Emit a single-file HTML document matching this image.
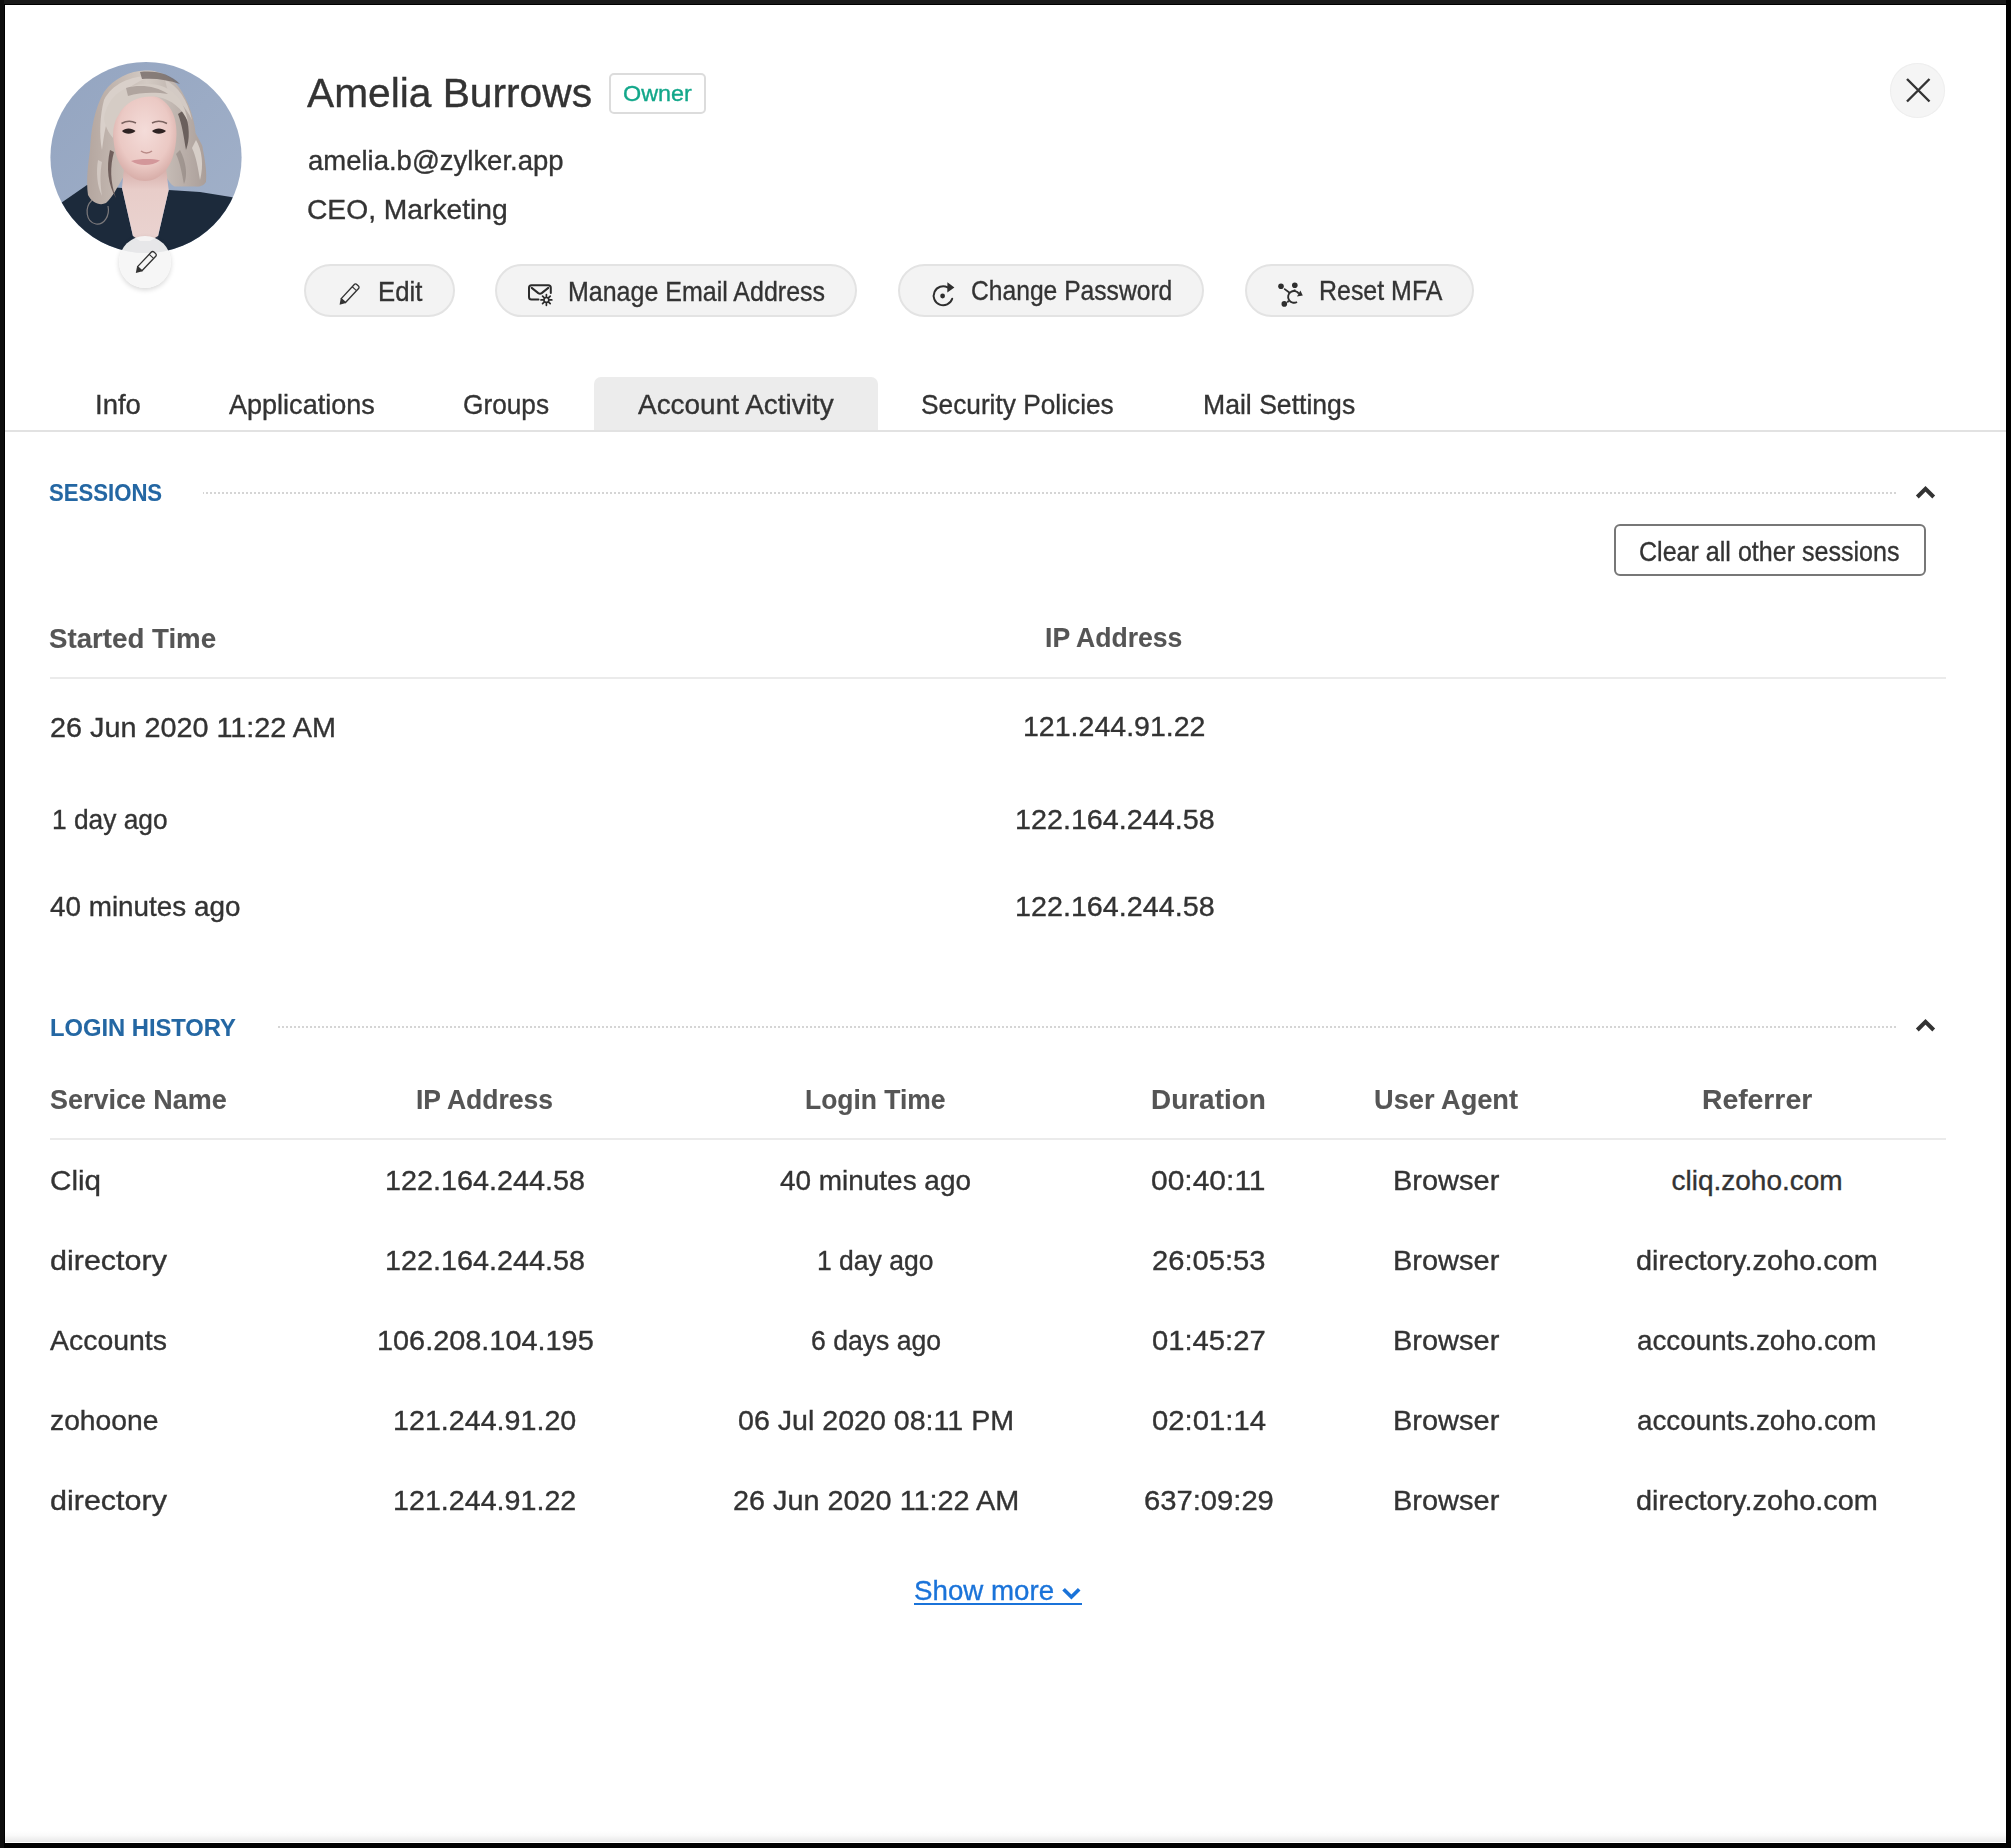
<!DOCTYPE html>
<html><head><meta charset="utf-8">
<style>
html,body{margin:0;padding:0;}
body{width:2011px;height:1848px;background:#000;position:relative;overflow:hidden;font-family:"Liberation Sans",sans-serif;}
#panel{position:absolute;left:5px;top:5px;width:2001px;height:1838px;background:#fff;overflow:hidden;}
.a{position:absolute;}
.t{position:absolute;white-space:nowrap;transform-origin:0 0;-webkit-text-stroke:0.35px currentColor;}
.btn{position:absolute;top:264px;height:49px;border:2px solid #e3e3e3;background:#f3f3f3;border-radius:27px;}
.hr{position:absolute;height:2px;background:#ebebeb;}
.dots{position:absolute;height:2px;background-image:linear-gradient(to right,#d5d5d5 50%,transparent 50%);background-size:4px 2px;}
</style></head><body>
<div id="panel"></div>
<div class="a" style="left:0;top:0;width:2006px;height:4px;background:#1a1a1a;"></div>
<div class="a" style="left:0;top:0;width:4px;height:1848px;background:#0e0e0e;"></div>
<div class="a" style="left:5px;top:1831px;width:2001px;height:11px;background:linear-gradient(#fff,#fafafa 40%,#e8e8e8);"></div>

<!-- avatar -->
<svg class="a" style="left:40px;top:50px" width="220" height="220" viewBox="40 50 220 220">
  <defs>
    <clipPath id="cc"><circle cx="146" cy="157.5" r="95.6"/></clipPath>
    <linearGradient id="bg" x1="0" y1="0" x2="1" y2="1"><stop offset="0" stop-color="#93a4c0"/><stop offset="1" stop-color="#a3b2ca"/></linearGradient>
    <radialGradient id="face" cx="0.5" cy="0.42" r="0.62"><stop offset="0" stop-color="#f4dcd9"/><stop offset="0.65" stop-color="#ebc9c4"/><stop offset="1" stop-color="#d3a7a2"/></radialGradient>
    <linearGradient id="hairg" x1="0" y1="0" x2="1" y2="0"><stop offset="0" stop-color="#b4a69f"/><stop offset="0.5" stop-color="#d3cac3"/><stop offset="1" stop-color="#aa9e99"/></linearGradient>
    <linearGradient id="chest" x1="0" y1="0" x2="0" y2="1"><stop offset="0" stop-color="#d5ada8"/><stop offset="0.3" stop-color="#e8cdc9"/><stop offset="1" stop-color="#ead3d0"/></linearGradient>
    <filter id="soft" x="-10%" y="-10%" width="120%" height="120%"><feGaussianBlur stdDeviation="0.6"/></filter>
  </defs>
  <g clip-path="url(#cc)">
    <rect x="40" y="50" width="220" height="220" fill="url(#bg)"/>
    <g filter="url(#soft)">
    <!-- jacket -->
    <path d="M36 274 L36 208 L61 203 L87 185 L122 188 L133 236.6 L158 236.6 L168.7 190 L200 192 L231 197 L264 205 L264 274 Z" fill="#1d2a3b"/>
    <path d="M133 236 L158 236 L162 274 L128 274 Z" fill="#2a3646"/>
    <!-- hair outer -->
    <path d="M145 70.5 C160 70 176 76 186.5 100.6 C192 112 195 125 195.5 133 C199 140 203 145 202.8 149 C205 160 207 172 206 181.8 C204 186 199 187 195.5 186.6 L174.4 186.6 C170 184 168 180 166 176 L124 176 C118 186 112 198 106 203 C100 206 92 203 88 195 C86 180 88 165 90 150 C91 130 94 110 104 92 C114 78 130 71 145 70.5 Z" fill="url(#hairg)"/>
    <!-- left curl ring over jacket -->
    <path d="M92 200 C84 208 86 222 96 224 C104 225 110 216 108 206" fill="none" stroke="#a59c98" stroke-width="1.2" opacity="0.7"/>
    <!-- hair highlights -->
    <path d="M104 100 C112 84 130 76 150 76 C138 82 120 90 112 108 C106 120 104 135 102 150 C99 135 100 115 104 100 Z" fill="#d9d0ca"/>
    <path d="M165 80 C178 86 188 100 192 120 C186 108 178 98 168 92 Z" fill="#d3cac4"/>
    <path d="M196 140 C202 150 204 165 200 180 C198 168 196 156 192 148 Z" fill="#d6cec8"/>
    <path d="M98 160 C96 172 97 186 102 196 C100 184 100 172 102 162 Z" fill="#d2c8c2"/>
    <!-- hair dark streaks -->
    <path d="M140 72 C156 70 170 74 180 84 C168 80 156 78 142 79 Z" fill="#6e6360" opacity="0.75"/>
    <path d="M110 150 C106 168 108 185 116 198 C110 182 110 166 114 152 Z" fill="#6f5f5b"/>
    <path d="M184 110 C190 125 190 140 186 150 C184 138 182 124 178 114 Z" fill="#6a5e5b"/>
    <path d="M180 150 C186 162 188 175 184 184 C182 174 180 162 176 154 Z" fill="#76696560"/>
    <!-- neck / chest -->
    <path d="M124 168 L166 168 L168.7 190 L158 236 L150 241 L140 241 L133 236 L122 188 Z" fill="url(#chest)"/>
    <!-- face -->
    <path d="M113 134 C112 110 124 95 145 94.8 C166 95 177 112 176.5 134 C176 152 171 165 165 171 C159 178 152 181 145 181 C138 181 131 178 125 171 C118 164 114 152 113 134 Z" fill="url(#face)"/>
    <!-- hair front bangs -->
    <path d="M104 118 C108 96 124 84 148 84 C168 84 184 96 188 122 C182 108 172 100 158 97 C142 95 126 100 118 116 C114 122 113 130 113 138 C108 132 105 126 104 118 Z" fill="#d5ccc5"/>
    <path d="M126 88 C140 84 156 86 168 94 C156 92 140 92 128 96 Z" fill="#978a86" opacity="0.6"/>
    <!-- features -->
    <path d="M121.5 123.5 C126 121 132 121 136 123" stroke="#7a625e" stroke-width="1.5" fill="none"/>
    <path d="M152 123 C156 121 162 121 167 123.5" stroke="#7a625e" stroke-width="1.5" fill="none"/>
    <path d="M122 131 C125 127.5 132 127.5 135.5 131 C132 134.5 125 134.5 122 131 Z" fill="#2e2222"/>
    <path d="M152 131 C155.5 127.5 162 127.5 166 131 C162 134.5 155.5 134.5 152 131 Z" fill="#2e2222"/>
    <path d="M141 151 C144 153.5 149 153.5 152 151" stroke="#b98c88" stroke-width="1.5" fill="none"/>
    <path d="M131 161 C140 158.5 152 158.5 160 160.5 C152 166 140 167 131 161 Z" fill="#d3979a"/>
    </g>
  </g>
</svg>
<!-- avatar edit button -->
<div class="a" style="left:119px;top:236px;width:52px;height:52px;border-radius:50%;background:rgba(245,245,245,0.93);box-shadow:0 2px 5px rgba(0,0,0,0.16);"></div>


<!-- close -->
<div class="a" style="left:1890px;top:63px;width:55px;height:55px;border-radius:50%;background:#f5f5f5;box-shadow:0 0 0 1px #eee inset;"></div>


<!-- owner badge -->
<div class="a" style="left:609px;top:73px;width:93px;height:37px;border:2px solid #dcdcdc;border-radius:5px;"></div>

<!-- buttons -->
<div class="btn" style="left:304px;width:147px;"></div>
<div class="btn" style="left:495px;width:358px;"></div>
<div class="btn" style="left:898px;width:302px;"></div>
<div class="btn" style="left:1245px;width:225px;"></div>

<!-- tabs -->
<div class="a" style="left:594px;top:377px;width:284px;height:54px;background:#ececec;border-radius:7px 7px 0 0;"></div>
<div class="hr" style="left:5px;top:429.5px;width:2001px;background:#e2e2e2;"></div>

<!-- sessions -->
<div class="dots" style="left:203px;top:492px;width:1694px;background-position:-1px 0;"></div>

<div class="a" style="left:1614px;top:524px;width:308px;height:48px;border:2px solid #777;border-radius:6px;"></div>
<div class="hr" style="left:50px;top:677px;width:1896px;"></div>

<!-- login history -->
<div class="dots" style="left:278px;top:1026px;width:1619px;"></div>

<div class="hr" style="left:50px;top:1137.5px;width:1896px;"></div>

<!-- show more -->
<div class="a" style="left:914px;top:1603px;width:168px;height:2px;background:#1a73d9;"></div>


<!-- icons overlay -->
<svg class="a" style="left:0;top:0" width="2011" height="1848" viewBox="0 0 2011 1848">
  <g id="edit-pencil"><path d="M341.25 298.64 L354.29 284.51 A1.74 1.74 0 0 1 356.75 284.41 L358.45 285.99 A1.74 1.74 0 0 1 358.55 288.45 L345.51 302.57 Z" fill="none" stroke="#333" stroke-width="1.35" stroke-linejoin="round"/><path d="M352.23 286.74 L356.49 290.68" stroke="#333" stroke-width="1.08"/><path d="M339.60 304.70 L340.75 298.18 L346.01 303.03 Z" fill="#333"/></g>
  <g id="avatar-pencil"><path d="M137.61 266.62 L151.38 252.05 A1.80 1.80 0 0 1 153.93 251.98 L155.67 253.62 A1.80 1.80 0 0 1 155.74 256.17 L141.97 270.74 Z" fill="none" stroke="#333" stroke-width="1.35" stroke-linejoin="round"/><path d="M149.20 254.36 L153.56 258.48" stroke="#333" stroke-width="1.08"/><path d="M135.80 272.90 L137.12 266.15 L142.46 271.20 Z" fill="#333"/></g>
  <!-- mail -->
  <path d="M538.5 299.5 H531.5 Q529 299.5 529 297 V287.7 Q529 285.2 531.5 285.2 H548.3 Q550.8 285.2 550.8 287.7 V292.9" fill="none" stroke="#2b2b2b" stroke-width="2" stroke-linecap="round"/>
  <path d="M531.7 287.9 L538.3 293.1 Q540 294.3 541.7 293.1 L548.3 287.9" fill="none" stroke="#2b2b2b" stroke-width="2" stroke-linecap="round"/>
  <circle cx="546.4" cy="299.9" r="2.4" fill="none" stroke="#2b2b2b" stroke-width="1.6"/>
  <path d="M549.60 299.90 L551.80 299.90 M548.66 302.16 L550.22 303.72 M546.40 303.10 L546.40 305.30 M544.14 302.16 L542.58 303.72 M543.20 299.90 L541.00 299.90 M544.14 297.64 L542.58 296.08 M546.40 296.70 L546.40 294.50 M548.66 297.64 L550.22 296.08" stroke="#2b2b2b" stroke-width="1.7" stroke-linecap="round"/>
  <!-- change password -->
  <path d="M952.2 298.8 A9.5 9.5 0 1 1 947.6 287.4" fill="none" stroke="#2e2e2e" stroke-width="2" stroke-linecap="round"/>
  <path d="M947.4 282.3 L954.4 287.6 L947.3 292.6 Z" fill="#2e2e2e"/>
  <circle cx="942.6" cy="296" r="2.4" fill="#2e2e2e"/>
  <!-- reset mfa -->
  <circle cx="1281" cy="286.2" r="2.8" fill="#2e2e2e"/>
  <circle cx="1294.8" cy="285.3" r="2.8" fill="#2e2e2e"/>
  <circle cx="1284.3" cy="303.9" r="2.8" fill="#2e2e2e"/>
  <path d="M1284.7 289.1 L1289.3 292.5" stroke="#2e2e2e" stroke-width="1.8" stroke-linecap="round"/>
  <path d="M1297 302 A5.9 5.9 0 1 1 1298.9 293.6" fill="none" stroke="#2e2e2e" stroke-width="1.9"/>
  <path d="M1294.6 289.5 L1294.6 291.5" stroke="#2e2e2e" stroke-width="1.8"/>
  <path d="M1300.4 290.4 L1302.8 295.6 L1297.0 296.6 Z" fill="#2e2e2e"/>
  <path d="M1288.6 300.8 L1287.3 302.5" stroke="#2e2e2e" stroke-width="1.8"/>
  <!-- close X -->
  <path d="M1907 79 L1929.5 101.5 M1929.5 79 L1907 101.5" stroke="#333" stroke-width="2.4"/>
  <!-- chevrons -->
  <path d="M1917.3 497 L1925.5 488.8 L1933.7 497" fill="none" stroke="#333" stroke-width="4"/>
  <path d="M1917.3 1030 L1925.5 1021.8 L1933.7 1030" fill="none" stroke="#333" stroke-width="4"/>
  <!-- show more chevron -->
  <path d="M1063.6 1589.2 L1071.4 1597 L1079.2 1589.2" fill="none" stroke="#1a73d9" stroke-width="3.7"/>
</svg>
<div class="t" style="left:307.00px;top:72.80px;font-size:40px;line-height:40px;color:#333;transform:scaleX(1.0175);">Amelia Burrows</div>
<div class="t" style="left:623.00px;top:82.70px;font-size:22px;line-height:22px;color:#12a78a;transform:scaleX(1.0617);">Owner</div>
<div class="t" style="left:307.80px;top:146.70px;font-size:28px;line-height:28px;color:#333;transform:scaleX(0.9816);">amelia.b@zylker.app</div>
<div class="t" style="left:307.30px;top:196.30px;font-size:28px;line-height:28px;color:#333;transform:scaleX(1.0075);">CEO, Marketing</div>
<div class="t" style="left:377.70px;top:277.60px;font-size:28px;line-height:28px;color:#333;transform:scaleX(0.9191);">Edit</div>
<div class="t" style="left:568.40px;top:277.50px;font-size:28px;line-height:28px;color:#333;transform:scaleX(0.8927);">Manage Email Address</div>
<div class="t" style="left:970.90px;top:277.40px;font-size:28px;line-height:28px;color:#333;transform:scaleX(0.8798);">Change Password</div>
<div class="t" style="left:1319.20px;top:277.40px;font-size:28px;line-height:28px;color:#333;transform:scaleX(0.8910);">Reset MFA</div>
<div class="t" style="left:94.60px;top:390.50px;font-size:28px;line-height:28px;color:#333;transform:scaleX(0.9829);">Info</div>
<div class="t" style="left:228.60px;top:390.50px;font-size:28px;line-height:28px;color:#333;transform:scaleX(0.9656);">Applications</div>
<div class="t" style="left:463.20px;top:390.50px;font-size:28px;line-height:28px;color:#333;transform:scaleX(0.9368);">Groups</div>
<div class="t" style="left:637.80px;top:390.50px;font-size:28px;line-height:28px;color:#333;transform:scaleX(0.9980);">Account Activity</div>
<div class="t" style="left:921.00px;top:390.50px;font-size:28px;line-height:28px;color:#333;transform:scaleX(0.9382);">Security Policies</div>
<div class="t" style="left:1202.70px;top:390.50px;font-size:28px;line-height:28px;color:#333;transform:scaleX(0.9495);">Mail Settings</div>
<div class="t" style="left:49.40px;top:481.30px;font-size:24px;line-height:24px;color:#2467a3;font-weight:bold;-webkit-text-stroke:0.1px currentColor;transform:scaleX(0.9218);">SESSIONS</div>
<div class="t" style="left:1638.70px;top:537.90px;font-size:28px;line-height:28px;color:#333;transform:scaleX(0.8952);">Clear all other sessions</div>
<div class="t" style="left:48.70px;top:624.50px;font-size:28px;line-height:28px;color:#555;font-weight:bold;-webkit-text-stroke:0.1px currentColor;transform:scaleX(0.9882);">Started Time</div>
<div class="t" style="left:1045.45px;top:624.20px;font-size:28px;line-height:28px;color:#555;font-weight:bold;-webkit-text-stroke:0.1px currentColor;transform:scaleX(0.9489);">IP Address</div>
<div class="t" style="left:49.80px;top:713.80px;font-size:28px;line-height:28px;color:#333;transform:scaleX(1.0280);">26 Jun 2020 11:22 AM</div>
<div class="t" style="left:1023.25px;top:713.40px;font-size:28px;line-height:28px;color:#333;transform:scaleX(1.0190);">121.244.91.22</div>
<div class="t" style="left:51.60px;top:806.40px;font-size:28px;line-height:28px;color:#333;transform:scaleX(0.9398);">1 day ago</div>
<div class="t" style="left:1014.70px;top:806.40px;font-size:28px;line-height:28px;color:#333;transform:scaleX(1.0257);">122.164.244.58</div>
<div class="t" style="left:49.80px;top:893.20px;font-size:28px;line-height:28px;color:#333;transform:scaleX(0.9943);">40 minutes ago</div>
<div class="t" style="left:1014.70px;top:893.30px;font-size:28px;line-height:28px;color:#333;transform:scaleX(1.0257);">122.164.244.58</div>
<div class="t" style="left:50.00px;top:1015.50px;font-size:24px;line-height:24px;color:#2467a3;font-weight:bold;-webkit-text-stroke:0.1px currentColor;transform:scaleX(0.9888);">LOGIN HISTORY</div>
<div class="t" style="left:49.50px;top:1085.90px;font-size:28px;line-height:28px;color:#555;font-weight:bold;-webkit-text-stroke:0.1px currentColor;transform:scaleX(0.9619);">Service Name</div>
<div class="t" style="left:416.00px;top:1085.90px;font-size:28px;line-height:28px;color:#555;font-weight:bold;-webkit-text-stroke:0.1px currentColor;transform:scaleX(0.9468);">IP Address</div>
<div class="t" style="left:805.05px;top:1085.90px;font-size:28px;line-height:28px;color:#555;font-weight:bold;-webkit-text-stroke:0.1px currentColor;transform:scaleX(0.9442);">Login Time</div>
<div class="t" style="left:1151.10px;top:1085.90px;font-size:28px;line-height:28px;color:#555;font-weight:bold;-webkit-text-stroke:0.1px currentColor;transform:scaleX(0.9974);">Duration</div>
<div class="t" style="left:1374.00px;top:1085.90px;font-size:28px;line-height:28px;color:#555;font-weight:bold;-webkit-text-stroke:0.1px currentColor;transform:scaleX(0.9710);">User Agent</div>
<div class="t" style="left:1702.00px;top:1085.90px;font-size:28px;line-height:28px;color:#555;font-weight:bold;-webkit-text-stroke:0.1px currentColor;transform:scaleX(1.0110);">Referrer</div>
<div class="t" style="left:49.50px;top:1166.80px;font-size:28px;line-height:28px;color:#333;transform:scaleX(1.0581);">Cliq</div>
<div class="t" style="left:384.90px;top:1166.80px;font-size:28px;line-height:28px;color:#333;transform:scaleX(1.0277);">122.164.244.58</div>
<div class="t" style="left:780.20px;top:1166.80px;font-size:28px;line-height:28px;color:#333;transform:scaleX(0.9974);">40 minutes ago</div>
<div class="t" style="left:1151.25px;top:1166.80px;font-size:28px;line-height:28px;color:#333;transform:scaleX(1.0711);">00:40:11</div>
<div class="t" style="left:1392.55px;top:1166.80px;font-size:28px;line-height:28px;color:#333;transform:scaleX(1.0351);">Browser</div>
<div class="t" style="left:1671.50px;top:1166.80px;font-size:28px;line-height:28px;color:#333;">cliq.zoho.com</div>
<div class="t" style="left:49.50px;top:1246.70px;font-size:28px;line-height:28px;color:#333;transform:scaleX(1.0894);">directory</div>
<div class="t" style="left:384.90px;top:1246.70px;font-size:28px;line-height:28px;color:#333;transform:scaleX(1.0277);">122.164.244.58</div>
<div class="t" style="left:817.45px;top:1246.70px;font-size:28px;line-height:28px;color:#333;transform:scaleX(0.9472);">1 day ago</div>
<div class="t" style="left:1151.80px;top:1246.70px;font-size:28px;line-height:28px;color:#333;transform:scaleX(1.0404);">26:05:53</div>
<div class="t" style="left:1392.55px;top:1246.70px;font-size:28px;line-height:28px;color:#333;transform:scaleX(1.0351);">Browser</div>
<div class="t" style="left:1636.10px;top:1246.70px;font-size:28px;line-height:28px;color:#333;transform:scaleX(1.0311);">directory.zoho.com</div>
<div class="t" style="left:49.50px;top:1326.90px;font-size:28px;line-height:28px;color:#333;transform:scaleX(1.0156);">Accounts</div>
<div class="t" style="left:376.55px;top:1326.90px;font-size:28px;line-height:28px;color:#333;transform:scaleX(1.0309);">106.208.104.195</div>
<div class="t" style="left:810.65px;top:1326.90px;font-size:28px;line-height:28px;color:#333;transform:scaleX(0.9496);">6 days ago</div>
<div class="t" style="left:1151.65px;top:1326.90px;font-size:28px;line-height:28px;color:#333;transform:scaleX(1.0431);">01:45:27</div>
<div class="t" style="left:1392.55px;top:1326.90px;font-size:28px;line-height:28px;color:#333;transform:scaleX(1.0351);">Browser</div>
<div class="t" style="left:1637.30px;top:1326.90px;font-size:28px;line-height:28px;color:#333;transform:scaleX(0.9925);">accounts.zoho.com</div>
<div class="t" style="left:49.50px;top:1406.50px;font-size:28px;line-height:28px;color:#333;transform:scaleX(1.0093);">zohoone</div>
<div class="t" style="left:393.25px;top:1406.50px;font-size:28px;line-height:28px;color:#333;transform:scaleX(1.0235);">121.244.91.20</div>
<div class="t" style="left:737.70px;top:1406.50px;font-size:28px;line-height:28px;color:#333;transform:scaleX(1.0211);">06 Jul 2020 08:11 PM</div>
<div class="t" style="left:1151.50px;top:1406.50px;font-size:28px;line-height:28px;color:#333;transform:scaleX(1.0459);">02:01:14</div>
<div class="t" style="left:1392.55px;top:1406.50px;font-size:28px;line-height:28px;color:#333;transform:scaleX(1.0351);">Browser</div>
<div class="t" style="left:1637.30px;top:1406.50px;font-size:28px;line-height:28px;color:#333;transform:scaleX(0.9925);">accounts.zoho.com</div>
<div class="t" style="left:49.50px;top:1486.70px;font-size:28px;line-height:28px;color:#333;transform:scaleX(1.0894);">directory</div>
<div class="t" style="left:393.25px;top:1486.70px;font-size:28px;line-height:28px;color:#333;transform:scaleX(1.0235);">121.244.91.22</div>
<div class="t" style="left:732.60px;top:1486.70px;font-size:28px;line-height:28px;color:#333;transform:scaleX(1.0291);">26 Jun 2020 11:22 AM</div>
<div class="t" style="left:1143.55px;top:1486.70px;font-size:28px;line-height:28px;color:#333;transform:scaleX(1.0425);">637:09:29</div>
<div class="t" style="left:1392.55px;top:1486.70px;font-size:28px;line-height:28px;color:#333;transform:scaleX(1.0351);">Browser</div>
<div class="t" style="left:1636.10px;top:1486.70px;font-size:28px;line-height:28px;color:#333;transform:scaleX(1.0311);">directory.zoho.com</div>
<div class="t" style="left:913.90px;top:1576.90px;font-size:28px;line-height:28px;color:#1a73d9;transform:scaleX(0.9894);">Show more</div>

</body></html>
